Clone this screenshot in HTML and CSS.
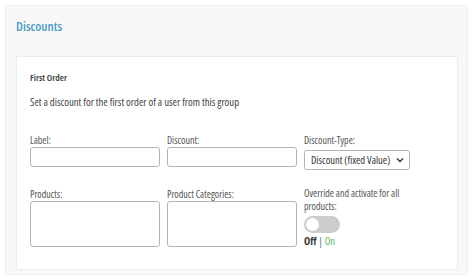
FILE: index.html
```html
<!DOCTYPE html>
<html lang="en">
<head>
    <meta charset="UTF-8">
    <meta name="viewport" content="width=device-width, initial-scale=1.0">
    <title>Discounts</title>
    <link rel="stylesheet" href="styles.css">
</head>
<body>
    <div class="panel">
        <h2 class="panel-title">Discounts</h2>

        <div class="card">
            <h3>First Order</h3>
            <p class="intro">Set a discount for the first order of a user from this group</p>

            <div class="form-grid">
                <div class="field">
                    <label for="label">Label:</label>
                    <input type="text" id="label">
                </div>
                <div class="field">
                    <label for="discount">Discount:</label>
                    <input type="text" id="discount">
                </div>
                <div class="field">
                    <label for="type">Discount-Type:</label>
                    <div class="select">
                        <span>Discount (fixed Value)</span>
                        <svg width="8" height="6" viewBox="0 0 8 6"><path d="M1 1.5 L4 4.5 L7 1.5" fill="none" stroke="#333" stroke-width="1.4"/></svg>
                    </div>
                </div>

                <div class="field">
                    <label for="products">Products:</label>
                    <textarea id="products"></textarea>
                </div>
                <div class="field">
                    <label for="categories">Product Categories:</label>
                    <textarea id="categories"></textarea>
                </div>
                <div class="field">
                    <label class="wrap">Override and activate for all products:</label>
                    <div class="toggle"><span class="knob"></span></div>
                    <div class="state"><b>Off</b> <span class="sep">|</span> <span class="on">On</span></div>
                </div>
            </div>
        </div>
    </div>
</body>
</html>
```

FILE: styles.css
```css
* {
    box-sizing: border-box;
    margin: 0;
    padding: 0;
}

body {
    font-family: 'Open Sans', sans-serif;
    font-stretch: 80%;
    background-color: white;
    color: #333;
}

.panel {
    margin: 5px 6px 5px 5px;
    height: 270px;
    background-color: #f8f8f8;
    border: 1px solid #efefef;
    padding: 0 9px 0 10px;
}

.panel-title {
    font-size: 13px;
    font-weight: 600;
    color: #4d9ac4;
    line-height: 16px;
    padding-top: 12px;
    height: 50px;
}

.card {
    background-color: white;
    border: 1px solid #ececec;
    height: 214px;
    padding: 14px 13px 0 13px;
}

h3 {
    font-size: 9.5px;
    font-weight: 600;
    color: #333;
    line-height: 14px;
}

.intro {
    font-size: 10.7px;
    color: #444;
    margin-top: 9px;
    line-height: 16px;
}

.form-grid {
    display: grid;
    grid-template-columns: 130px 130px 1fr;
    column-gap: 7px;
    row-gap: 17px;
    margin-top: 23px;
}

.field label {
    display: block;
    font-size: 10px;
    color: #555;
    line-height: 14px;
}

.field label.wrap {
    max-width: 116px;
    line-height: 13px;
}

input,
textarea {
    display: block;
    width: 100%;
    border: 1px solid #b5b5b5;
    border-radius: 3px;
    background: white;
}

input {
    height: 20px;
}

textarea {
    height: 46px;
    resize: none;
}

.select {
    display: inline-flex;
    align-items: center;
    gap: 6px;
    height: 20px;
    border: 1px solid #b5b5b5;
    border-radius: 3px;
    padding: 0 5px 0 6px;
    font-size: 10.5px;
    color: #333;
}

.toggle {
    width: 36px;
    height: 17px;
    border-radius: 9px;
    background-color: #ccc;
    margin-top: 3px;
    padding: 2px;
}

.knob {
    display: block;
    width: 13px;
    height: 13px;
    border-radius: 50%;
    background-color: white;
}

.state {
    font-size: 10.5px;
    line-height: 14px;
    margin-top: 1px;
}

.state b {
    font-weight: 700;
    color: #333;
}

.sep {
    color: #4d6a84;
}

.on {
    color: #5cb85c;
}
```
